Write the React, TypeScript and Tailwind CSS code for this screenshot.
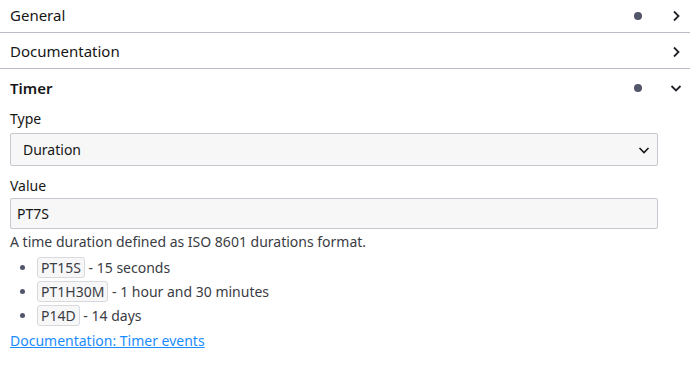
import React from "react";

const Chevron = ({ down }: { down?: boolean }) => (
  <svg width="16" height="16" viewBox="0 0 16 16" className="text-[#22242a]">
    {down ? (
      <path d="M3.5 6 L8 10.5 L12.5 6" fill="none" stroke="currentColor" strokeWidth="1.8" />
    ) : (
      <path d="M6 3.5 L10.5 8 L6 12.5" fill="none" stroke="currentColor" strokeWidth="1.8" />
    )}
  </svg>
);

const Header = ({ title, dot, open }: { title: string; dot?: boolean; open?: boolean }) => (
  <div className={`flex items-center h-[36px] pt-[2px] pl-[10px] pr-[6px] ${open ? "" : "border-b border-[#b9bcc6]"}`}>
    <span className={`flex-1 text-[15px] ${open ? "font-semibold" : ""} text-[#161616]`}>{title}</span>
    {dot && <span className="w-[8px] h-[8px] rounded-full bg-[#52566a] mr-[26px]" />}
    <Chevron down={open} />
  </div>
);

const Code = ({ children }: { children: React.ReactNode }) => (
  <code className="inline-block border border-[#d7d9df] bg-[#f7f7f8] rounded-[3px] px-[3px] leading-[19px] text-[14px] font-[inherit]">{children}</code>
);

export default function App() {
  return (
    <div className="w-[690px] h-[370px] bg-white overflow-hidden text-[#161616]" style={{ fontFamily: '"Noto Sans", sans-serif' }}>
      <div className="-mt-[3px]">
        <Header title="General" dot />
        <Header title="Documentation" />
        <Header title="Timer" dot open />
      </div>
      <div className="px-[10px] pr-[32px] text-[14px]">
        <div className="mt-[4px] leading-[20px]">Type</div>
        <div className="mt-[4px] h-[33px] border border-[#c6c8cf] bg-[#f7f7f8] rounded-[2px] flex items-center pl-[12px] pr-[6px]">
          <span className="flex-1">Duration</span>
          <svg width="14" height="14" viewBox="0 0 14 14"><path d="M2.5 5 L7 9.5 L11.5 5" fill="none" stroke="#161616" strokeWidth="1.6" /></svg>
        </div>
        <div className="mt-[10px] leading-[20px]">Value</div>
        <div className="mt-[2px] h-[31px] border border-[#c6c8cf] bg-[#f7f7f8] rounded-[2px] flex items-center pl-[6px]">
          <span>PT7S</span>
        </div>
        <div className="mt-[3px] leading-[20px] text-[#3a3c44]">A time duration defined as ISO 8601 durations format.</div>
        <ul className="mt-[4px] list-disc pl-[27px] text-[#3a3c44] marker:text-[#52566a]">
          <li className="leading-[24px]"><Code>PT15S</Code> - 15 seconds</li>
          <li className="leading-[24px]"><Code>PT1H30M</Code> - 1 hour and 30 minutes</li>
          <li className="leading-[24px]"><Code>P14D</Code> - 14 days</li>
        </ul>
        <a href="#" className="block mt-[2px] leading-[22px] text-[#1a8cff] underline">Documentation: Timer events</a>
      </div>
    </div>
  );
}
